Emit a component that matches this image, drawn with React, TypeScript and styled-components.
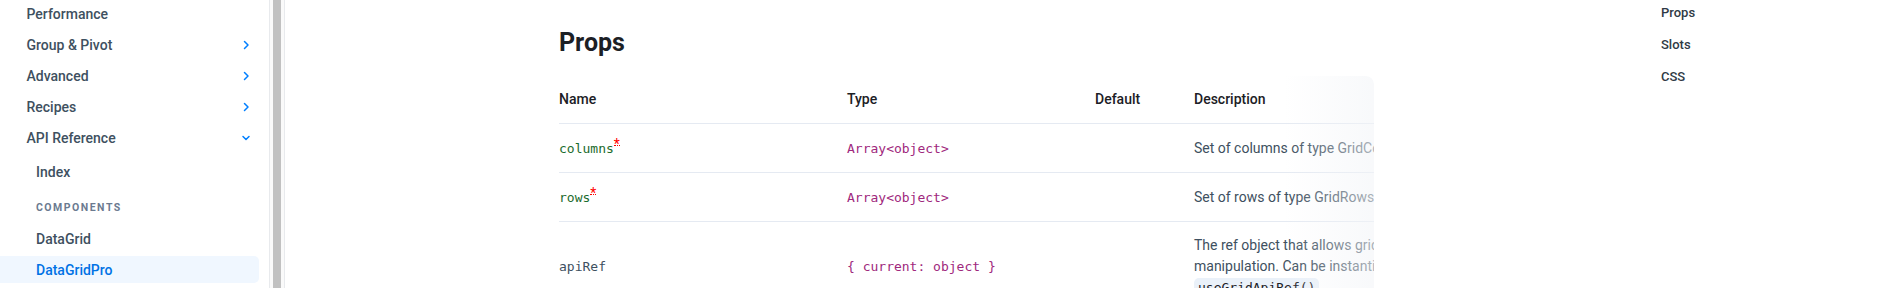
import React from "react";
import styled, { createGlobalStyle } from "styled-components";

const GlobalStyle = createGlobalStyle`
  html, body {
    margin: 0;
    padding: 0;
    background: #fff;
  }
  body {
    font-family: Roboto, "Liberation Sans", sans-serif;
    -webkit-font-smoothing: antialiased;
  }
`;

const MONO = `"DejaVu Sans Mono", "Liberation Mono", monospace`;

const Page = styled.div`
  display: flex;
  height: 288px;
  overflow: hidden;
`;

const Sidebar = styled.nav`
  flex: none;
  width: 270px;
  border-right: 1px solid #e8eaed;
  padding-right: 10px;
  box-sizing: border-box;
  overflow: hidden;
`;

const NavList = styled.ul`
  list-style: none;
  margin: 0;
  padding: 0;
`;

const NavItem = styled.li<{ $sub?: boolean; $active?: boolean }>`
  display: flex;
  align-items: center;
  justify-content: space-between;
  height: 27px;
  margin: 0 0 4px;
  padding: 0 7px 0 ${(p) => (p.$sub ? 36 : 26.5)}px;
  border-radius: 0 5px 5px 0;
  font-size: 14px;
  font-weight: 500;
  color: ${(p) => (p.$active ? "#0072e5" : "#3e5060")};
  background: ${(p) => (p.$active ? "#f0f7ff" : "transparent")};
`;

const SubList = styled.ul`
  list-style: none;
  margin: 0;
  padding: 3px 0 0;
`;

const SubHeader = styled.li`
  padding: 9px 0 7px 36px;
  line-height: 20px;
  font-size: 10.5px;
  font-weight: 700;
  letter-spacing: 1.5px;
  text-transform: uppercase;
  color: #6b7a90;
`;

const ScrollTrack = styled.div`
  flex: none;
  width: 15px;
  padding: 0 3px;
  box-sizing: border-box;
  background: #fafafa;
  border-right: 1px solid #e8eaed;
  display: flex;
  justify-content: center;
`;

const ScrollThumb = styled.div`
  width: 8px;
  height: 100%;
  background: #c1c1c1;
`;

const Main = styled.main`
  flex: 1;
  display: grid;
  grid-template-columns: 1fr 226px;
  min-width: 0;
`;

const Content = styled.section`
  padding-left: 274px;
  min-width: 0;
`;

const Heading = styled.h2`
  margin: 0;
  padding-top: 28px;
  font-size: 25px;
  line-height: 30px;
  font-weight: 700;
  color: #1c2025;
`;

const TableWrap = styled.div`
  position: relative;
  width: 815px;
  margin-top: 18px;
  overflow: hidden;
  border-radius: 8px 8px 0 0;
`;

const FadeEdge = styled.div`
  position: absolute;
  top: 0;
  right: 0;
  bottom: 0;
  width: 90px;
  border-top-right-radius: 8px;
  background: linear-gradient(
    to right,
    rgba(245, 247, 250, 0) 0%,
    rgba(243, 245, 248, 0.35) 60%,
    rgba(243, 245, 248, 0.6) 100%
  );
  pointer-events: none;
`;

const Table = styled.table`
  border-collapse: collapse;
  table-layout: fixed;
  width: 925px;
`;

const HeadCell = styled.th`
  text-align: left;
  padding: 13px 0;
  line-height: 21px;
  font-size: 14px;
  font-weight: 500;
  color: #1c2025;
  border-bottom: 1px solid #e5eaf2;
`;

const Cell = styled.td`
  padding: 13px 0;
  line-height: 21px;
  font-size: 14px;
  color: #3e5060;
  vertical-align: middle;
  border-bottom: 1px solid #e5eaf2;
`;

const PropName = styled.span<{ $required?: boolean }>`
  font-family: ${MONO};
  font-size: 13px;
  color: ${(p) => (p.$required ? "#1b6b2d" : "#3e5060")};
`;

const Required = styled.span`
  display: inline-block;
  height: 8px;
  line-height: 14px;
  overflow: visible;
  vertical-align: 4px;
  color: #ff0000;
  font-family: Roboto, sans-serif;
  font-size: 14px;
  border-bottom: 1px dotted #ff0000;
`;

const TypeText = styled.span`
  font-family: ${MONO};
  font-size: 13px;
  color: #a0287d;
`;

const InlineCode = styled.code`
  font-family: ${MONO};
  font-size: 13px;
  color: #1c2025;
  background: #eaf1f9;
  border-radius: 5px;
  padding: 2px 4px;
`;

const Toc = styled.aside`
  min-width: 0;
`;

const TocList = styled.ul`
  list-style: none;
  margin: -3px 0 0;
  padding: 0;
`;

const TocItem = styled.li`
  padding: 6px 0;
  line-height: 20px;
  font-size: 13px;
  font-weight: 500;
  color: #2f3a45;
`;

const Chevron: React.FC<{ down?: boolean }> = ({ down }) => (
  <svg width="12" height="12" viewBox="0 0 12 12" fill="none">
    <path
      d={down ? "M3 4.5 L6 7.5 L9 4.5" : "M4.5 2.5 L8 6 L4.5 9.5"}
      stroke="#007fff"
      strokeWidth="1.5"
      strokeLinecap="round"
      strokeLinejoin="round"
    />
  </svg>
);

const navItems = [
  { label: "Performance" },
  { label: "Group & Pivot", chevron: true },
  { label: "Advanced", chevron: true },
  { label: "Recipes", chevron: true },
];

const rows = [
  {
    name: "columns",
    required: true,
    type: "Array<object>",
    desc: <>Set of columns of type GridColDef[].</>,
  },
  {
    name: "rows",
    required: true,
    type: "Array<object>",
    desc: <>Set of rows of type GridRowsProp.</>,
  },
  {
    name: "apiRef",
    type: "{ current: object }",
    desc: (
      <>
        The ref object that allows grid state manipulation. Can be instantiated
        with <InlineCode>useGridApiRef()</InlineCode>.
      </>
    ),
  },
];

export default function App() {
  return (
    <>
      <GlobalStyle />
      <Page>
        <Sidebar>
          <NavList>
            {navItems.map((item) => (
              <NavItem key={item.label}>
                {item.label}
                {item.chevron && <Chevron />}
              </NavItem>
            ))}
            <NavItem>
              API Reference
              <Chevron down />
            </NavItem>
            <SubList>
              <NavItem $sub>Index</NavItem>
              <SubHeader>Components</SubHeader>
              <NavItem $sub>DataGrid</NavItem>
              <NavItem $sub $active>
                DataGridPro
              </NavItem>
            </SubList>
          </NavList>
        </Sidebar>
        <ScrollTrack>
          <ScrollThumb />
        </ScrollTrack>
        <Main>
          <Content>
            <Heading>Props</Heading>
            <TableWrap>
              <Table>
                <colgroup>
                  <col style={{ width: 288 }} />
                  <col style={{ width: 248 }} />
                  <col style={{ width: 99 }} />
                  <col style={{ width: 290 }} />
                </colgroup>
                <thead>
                  <tr>
                    <HeadCell>Name</HeadCell>
                    <HeadCell>Type</HeadCell>
                    <HeadCell>Default</HeadCell>
                    <HeadCell>Description</HeadCell>
                  </tr>
                </thead>
                <tbody>
                  {rows.map((r) => (
                    <tr key={r.name}>
                      <Cell>
                        <PropName $required={r.required}>{r.name}</PropName>
                        {r.required && <Required>*</Required>}
                      </Cell>
                      <Cell>
                        <TypeText>{r.type}</TypeText>
                      </Cell>
                      <Cell />
                      <Cell>{r.desc}</Cell>
                    </tr>
                  ))}
                </tbody>
              </Table>
              <FadeEdge />
            </TableWrap>
          </Content>
          <Toc>
            <TocList>
              <TocItem>Props</TocItem>
              <TocItem>Slots</TocItem>
              <TocItem>CSS</TocItem>
            </TocList>
          </Toc>
        </Main>
      </Page>
    </>
  );
}
